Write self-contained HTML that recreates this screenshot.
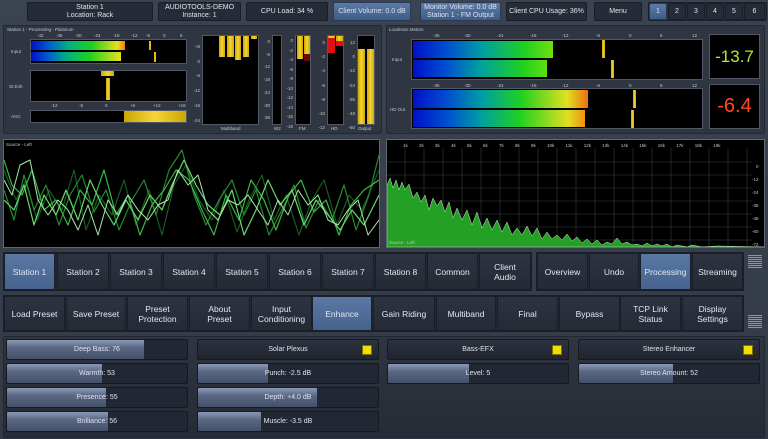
<!DOCTYPE html>
<html><head><meta charset="utf-8">
<style>
*{margin:0;padding:0;box-sizing:border-box}
body{width:768px;height:439px;overflow:hidden;background:linear-gradient(#3b4351,#333a46);font-family:"Liberation Sans",sans-serif;color:#e6e9ef;position:relative}
.a{position:absolute}
.box{position:absolute;background:#262c37;border:1px solid #1a1e26;border-radius:2px;display:flex;align-items:center;justify-content:center;text-align:center;font-size:7px;line-height:8px;color:#dfe3ea}
.blue{background:linear-gradient(#5b7aa6,#3e5c88);border-color:#2a3a55}
.panel{position:absolute;background:#2f3642;border:1px solid #222832;border-radius:2px}
.blk{position:absolute;background:#000;border:1px solid #505866}
.lbl{position:absolute;font-size:4.5px;line-height:5px;color:#bfc6d2;white-space:nowrap}
.y{position:absolute;background:linear-gradient(90deg,#c9a800,#f7d23a,#c9a800)}
.btn{position:absolute;background:linear-gradient(#2d3340,#252a35);border:1px solid #1a1e26;display:flex;align-items:center;justify-content:center;text-align:center;font-size:8.5px;line-height:10px;color:#e4e7ee}
.act{background:linear-gradient(#5a78a3,#45638e)}
.sl{position:absolute;height:21px;background:#222833;border:1px solid #151920;border-radius:2px;overflow:hidden;font-size:7px;color:#dfe3ea}
.sl .f{position:absolute;left:0;top:0;bottom:0;background:linear-gradient(#8a9ab6,#5a6884 40%,#43506a)}
.sl span{position:absolute;left:0;right:0;top:6px;text-align:center}
.sq{position:absolute;right:6px;top:5px;width:10px;height:10px;background:#f0e000;border:1px solid #807000}
.sc{position:absolute;font-size:4.5px;color:#bfc6d2;text-align:right;width:12px}
</style></head><body>
<div class="box" style="left:27px;top:2px;width:126px;height:19px">Station 1<br>Location: Rack</div>
<div class="box" style="left:158px;top:2px;width:83px;height:19px">AUDIOTOOLS-DEMO<br>Instance: 1</div>
<div class="box" style="left:246px;top:2px;width:82px;height:19px">CPU Load: 34 %</div>
<div class="box blue" style="left:333px;top:2px;width:78px;height:19px">Client Volume: 0.0 dB</div>
<div class="box blue" style="left:420px;top:2px;width:81px;height:19px">Monitor Volume: 0.0 dB<br>Station 1 - FM Output</div>
<div class="box" style="left:506px;top:2px;width:81px;height:19px">Client CPU Usage: 36%</div>
<div class="box" style="left:594px;top:2px;width:48px;height:19px">Menu</div>
<div class="box" style="left:648px;top:2px;width:119px;height:19px;background:#2a303b"></div>
<div class="box blue" style="left:649px;top:3px;width:18px;height:17px">1</div>
<div class="box" style="left:668px;top:3px;width:18px;height:17px">2</div>
<div class="box" style="left:687px;top:3px;width:18px;height:17px">3</div>
<div class="box" style="left:706px;top:3px;width:18px;height:17px">4</div>
<div class="box" style="left:725px;top:3px;width:18px;height:17px">5</div>
<div class="box" style="left:744px;top:3px;width:21px;height:17px">6</div>

<div class="panel" style="left:3px;top:25px;width:379px;height:109px"></div>
<div class="lbl" style="left:7px;top:27px">Station 1 - Processing - Platinium</div>
<div class="lbl" style="left:11px;top:49px">Input</div>
<div class="lbl" style="left:9px;top:84px">St Enh</div>
<div class="lbl" style="left:11px;top:114px">AGC</div>
<div class="lbl" style="left:37px;top:33px">-42</div><div class="lbl" style="left:56px;top:33px">-36</div><div class="lbl" style="left:75px;top:33px">-30</div><div class="lbl" style="left:94px;top:33px">-24</div><div class="lbl" style="left:113px;top:33px">-18</div><div class="lbl" style="left:131px;top:33px">-12</div><div class="lbl" style="left:146px;top:33px">-6</div><div class="lbl" style="left:163px;top:33px">0</div><div class="lbl" style="left:180px;top:33px">6</div>
<div class="blk" style="left:30px;top:39px;width:157px;height:25px"></div>
<div class="a" style="left:31px;top:41px;width:94px;height:9px;background:linear-gradient(90deg,#0010c8,#0060d0 20%,#00b080 40%,#20d020 65%,#e8e020 92%,#f08010)"></div>
<div class="a" style="left:31px;top:52px;width:90px;height:9px;background:linear-gradient(90deg,#0010c8,#0060d0 20%,#00b080 40%,#20d020 65%,#e8e020)"></div>
<div class="y" style="left:149px;top:41px;width:2px;height:9px"></div>
<div class="y" style="left:154px;top:52px;width:2px;height:10px"></div>
<div class="blk" style="left:30px;top:70px;width:157px;height:32px"></div>
<div class="y" style="left:101px;top:71px;width:13px;height:5px"></div>
<div class="y" style="left:106px;top:78px;width:4px;height:22px"></div>
<div class="lbl" style="left:51px;top:103px">-12</div><div class="lbl" style="left:79px;top:103px">-6</div><div class="lbl" style="left:105px;top:103px">0</div><div class="lbl" style="left:130px;top:103px">+6</div><div class="lbl" style="left:153px;top:103px">+12</div><div class="lbl" style="left:178px;top:103px">+18</div>
<div class="blk" style="left:30px;top:110px;width:157px;height:13px"></div>
<div class="y" style="left:124px;top:111px;width:62px;height:11px"></div>

<div class="sc" style="left:188px;top:40px;line-height:14.7px">+6<br>0<br>-6<br>-12<br>-18<br>-24</div>
<div class="blk" style="left:202px;top:35px;width:57px;height:90px"></div>
<div class="y" style="left:219px;top:36px;width:6px;height:21px"></div>
<div class="y" style="left:227px;top:36px;width:7px;height:21px"></div>
<div class="y" style="left:235px;top:36px;width:6px;height:24px"></div>
<div class="y" style="left:243px;top:36px;width:6px;height:21px"></div>
<div class="y" style="left:251px;top:36px;width:6px;height:3px"></div>
<div class="lbl" style="left:221px;top:126px">Multiband</div>
<div class="sc" style="left:258px;top:36px;line-height:12.7px">0<br>-6<br>-12<br>-18<br>-24<br>-30<br>-36</div>
<div class="blk" style="left:272px;top:35px;width:10px;height:90px"></div>
<div class="lbl" style="left:274px;top:126px">W2</div>
<div class="sc" style="left:281px;top:36px;line-height:9.5px">0<br>-2<br>-4<br>-6<br>-8<br>-10<br>-12<br>-14<br>-16<br>-18</div>
<div class="blk" style="left:295px;top:35px;width:16px;height:90px"></div>
<div class="y" style="left:297px;top:36px;width:6px;height:23px"></div>
<div class="y" style="left:304px;top:36px;width:6px;height:18px"></div>
<div class="a" style="left:304px;top:54px;width:6px;height:7px;background:#6a0808"></div>
<div class="lbl" style="left:299px;top:126px">FM</div>
<div class="sc" style="left:313px;top:36px;line-height:14.2px">0<br>-2<br>-4<br>-6<br>-8<br>-10<br>-12</div>
<div class="blk" style="left:327px;top:35px;width:17px;height:90px"></div>
<div class="a" style="left:328px;top:36px;width:7px;height:17px;background:#e01010"></div>
<div class="y" style="left:328px;top:36px;width:7px;height:2px"></div>
<div class="a" style="left:336px;top:36px;width:7px;height:10px;background:#e01010"></div>
<div class="y" style="left:336px;top:36px;width:7px;height:5px"></div>
<div class="lbl" style="left:331px;top:126px">HD</div>
<div class="sc" style="left:343px;top:36px;line-height:14.2px">12<br>0<br>-12<br>-24<br>-36<br>-48<br>-60</div>
<div class="blk" style="left:357px;top:35px;width:18px;height:90px"></div>
<div class="y" style="left:358px;top:49px;width:7px;height:75px"></div>
<div class="y" style="left:367px;top:49px;width:7px;height:75px"></div>
<div class="lbl" style="left:358px;top:126px">Output</div>

<div class="panel" style="left:386px;top:25px;width:379px;height:109px"></div>
<div class="lbl" style="left:389px;top:27px">Loudness Meters</div>
<div class="lbl" style="left:392px;top:57px">Input</div>
<div class="lbl" style="left:390px;top:107px">HD Out</div>
<div class="lbl" style="left:433px;top:33px">-36</div><div class="lbl" style="left:464px;top:33px">-30</div><div class="lbl" style="left:497px;top:33px">-24</div><div class="lbl" style="left:530px;top:33px">-18</div><div class="lbl" style="left:562px;top:33px">-12</div><div class="lbl" style="left:596px;top:33px">-6</div><div class="lbl" style="left:629px;top:33px">0</div><div class="lbl" style="left:660px;top:33px">6</div><div class="lbl" style="left:692px;top:33px">12</div>
<div class="lbl" style="left:433px;top:83px">-36</div><div class="lbl" style="left:464px;top:83px">-30</div><div class="lbl" style="left:497px;top:83px">-24</div><div class="lbl" style="left:530px;top:83px">-18</div><div class="lbl" style="left:562px;top:83px">-12</div><div class="lbl" style="left:596px;top:83px">-6</div><div class="lbl" style="left:629px;top:83px">0</div><div class="lbl" style="left:660px;top:83px">6</div><div class="lbl" style="left:692px;top:83px">12</div>
<div class="blk" style="left:411px;top:39px;width:292px;height:41px"></div>
<div class="a" style="left:413px;top:41px;width:140px;height:17px;background:linear-gradient(90deg,#0010c8,#0050d0 25%,#00a0a0 50%,#20d020 80%,#70e010)"></div>
<div class="a" style="left:413px;top:60px;width:134px;height:17px;background:linear-gradient(90deg,#0010c8,#0050d0 25%,#00a0a0 50%,#20d020 82%,#60e010)"></div>
<div class="y" style="left:602px;top:40px;width:3px;height:18px"></div>
<div class="y" style="left:611px;top:60px;width:3px;height:18px"></div>
<div class="blk" style="left:411px;top:88px;width:292px;height:41px"></div>
<div class="a" style="left:413px;top:90px;width:175px;height:18px;background:linear-gradient(90deg,#0010c8,#0050d0 20%,#00a0a0 40%,#20d020 62%,#e0e020 88%,#f07010)"></div>
<div class="a" style="left:413px;top:110px;width:172px;height:17px;background:linear-gradient(90deg,#0010c8,#0050d0 20%,#00a0a0 40%,#20d020 62%,#e0e020 90%,#f09010)"></div>
<div class="y" style="left:633px;top:90px;width:3px;height:18px"></div>
<div class="y" style="left:631px;top:110px;width:3px;height:18px"></div>
<div class="blk" style="left:709px;top:34px;width:51px;height:45px;display:flex;align-items:center;justify-content:center;font-size:17px;color:#b8e830">-13.7</div>
<div class="blk" style="left:709px;top:84px;width:51px;height:45px;display:flex;align-items:center;justify-content:center;font-size:20px;color:#ff4a20">-6.4</div>

<div class="blk" style="left:3px;top:139px;width:377px;height:109px;border-color:#606876"></div>
<div class="lbl" style="left:6px;top:142px">Source - Left</div>
<svg class="a" style="left:4px;top:140px;filter:blur(0.35px)" width="375" height="107" fill="none" stroke-width="1.2" stroke-linejoin="round">
<polyline stroke="#1a5a22" points="0,30 12,60 22,40 33,80 45,50 58,70 70,30 82,90 95,55 108,75 120,40 132,85 145,50 158,95 170,45 182,25 195,60 208,80 220,50 233,92 245,60 258,35 270,80 282,55 295,95 308,60 320,40 333,85 345,55 358,70 375,30"/>
<polyline stroke="#248a30" points="0,50 10,80 20,35 30,70 42,45 55,85 66,55 78,35 90,72 102,50 115,90 128,60 140,40 152,75 165,30 178,10 190,55 202,85 215,60 228,40 240,75 252,50 265,95 278,70 290,45 302,88 315,60 328,80 340,45 352,90 365,55 375,15"/>
<polyline stroke="#3cb848" points="0,20 8,45 18,55 28,30 40,70 52,60 64,85 76,50 88,65 100,30 112,75 124,55 136,95 148,65 160,50 172,30 185,40 198,70 210,95 222,55 235,80 247,40 260,60 272,90 285,55 297,40 310,72 322,60 335,95 347,65 360,50 375,40"/>
<polyline stroke="#6cd870" points="0,60 10,70 20,45 30,85 40,55 52,75 62,50 74,80 86,40 98,65 110,85 122,60 134,80 146,55 158,70 168,45 180,20 192,45 204,65 216,75 228,50 240,95 252,70 264,40 276,65 288,50 300,85 312,60 324,75 336,90 348,70 360,85 375,55"/>
<polyline stroke="#a8e8a8" stroke-width="1" points="0,40 8,55 16,25 26,20 34,60 44,75 54,60 64,70 74,90 84,65 94,95 104,60 114,75 124,55 134,70 144,80 154,65 164,60 174,30 184,45 194,35 204,70 214,80 224,60 234,65 244,55 254,70 264,85 274,60 284,75 294,50 304,65 314,55 324,80 334,85 344,70 354,60 364,95 375,80"/>
</svg>

<div class="blk" style="left:386px;top:139px;width:379px;height:109px;border-color:#606876"></div>
<svg class="a" style="left:387px;top:140px" width="377" height="107">
<g stroke="#3a3f48" stroke-width="0.6">
<line x1="18" y1="8" x2="18" y2="107"/><line x1="37" y1="8" x2="37" y2="107"/><line x1="56" y1="8" x2="56" y2="107"/><line x1="75" y1="8" x2="75" y2="107"/><line x1="94" y1="8" x2="94" y2="107"/><line x1="113" y1="8" x2="113" y2="107"/><line x1="132" y1="8" x2="132" y2="107"/><line x1="151" y1="8" x2="151" y2="107"/><line x1="170" y1="8" x2="170" y2="107"/><line x1="189" y1="8" x2="189" y2="107"/><line x1="208" y1="8" x2="208" y2="107"/><line x1="227" y1="8" x2="227" y2="107"/><line x1="246" y1="8" x2="246" y2="107"/><line x1="265" y1="8" x2="265" y2="107"/><line x1="284" y1="8" x2="284" y2="107"/><line x1="303" y1="8" x2="303" y2="107"/><line x1="322" y1="8" x2="322" y2="107"/><line x1="341" y1="8" x2="341" y2="107"/><line x1="360" y1="8" x2="360" y2="107"/>
<line x1="0" y1="22" x2="365" y2="22"/><line x1="0" y1="35" x2="365" y2="35"/><line x1="0" y1="48" x2="365" y2="48"/><line x1="0" y1="61" x2="365" y2="61"/><line x1="0" y1="74" x2="365" y2="74"/><line x1="0" y1="87" x2="365" y2="87"/><line x1="0" y1="100" x2="365" y2="100"/>
</g>
<polygon fill="#24a024" stroke="#c8e8c8" stroke-width="0.5" points="0,107 0,45 3,38 6,48 9,40 12,50 15,42 18,50 22,44 26,58 30,52 34,62 38,55 42,70 46,58 50,66 54,60 58,72 62,62 66,78 70,68 75,80 80,70 85,85 90,72 95,88 100,78 105,90 110,80 115,92 120,82 125,95 130,88 135,95 140,86 145,96 150,88 155,99 160,92 165,99 170,95 175,100 180,94 185,101 190,97 195,103 200,99 205,104 210,100 215,105 220,102 225,104 230,98 235,104 240,102 245,105 250,104 255,106 260,103 265,106 270,104 275,106 280,104 285,107 290,105 300,107 305,105 315,107 330,106 377,107"/>
</svg>
<div class="lbl" style="left:403px;top:143px;word-spacing:10px">1k 2k 3k 4k 5k 6k 7k 8k 9k 10k 11k 12k 13k 14k 15k 16k 17k 18k 19k</div>
<div class="lbl" style="left:752px;top:160px;line-height:13px;text-align:right">0<br>-12<br>-24<br>-36<br>-48<br>-60<br>-72</div>
<div class="lbl" style="left:389px;top:240px">Source - Left</div>

<div class="a" style="left:3px;top:252px;width:529px;height:39px;background:#222731;border:1px solid #1a1e26"></div>
<div class="btn act" style="left:4px;top:253px;width:51px;height:37px">Station 1</div>
<div class="btn" style="left:57px;top:253px;width:52px;height:37px">Station 2</div>
<div class="btn" style="left:110px;top:253px;width:52px;height:37px">Station 3</div>
<div class="btn" style="left:163px;top:253px;width:52px;height:37px">Station 4</div>
<div class="btn" style="left:216px;top:253px;width:52px;height:37px">Station 5</div>
<div class="btn" style="left:269px;top:253px;width:52px;height:37px">Station 6</div>
<div class="btn" style="left:322px;top:253px;width:52px;height:37px">Station 7</div>
<div class="btn" style="left:375px;top:253px;width:51px;height:37px">Station 8</div>
<div class="btn" style="left:427px;top:253px;width:51px;height:37px">Common</div>
<div class="btn" style="left:479px;top:253px;width:52px;height:37px">Client<br>Audio</div>
<div class="a" style="left:536px;top:252px;width:208px;height:39px;background:#222731;border:1px solid #1a1e26"></div>
<div class="btn" style="left:537px;top:253px;width:51px;height:37px">Overview</div>
<div class="btn" style="left:589px;top:253px;width:50px;height:37px">Undo</div>
<div class="btn act" style="left:640px;top:253px;width:51px;height:37px">Processing</div>
<div class="btn" style="left:692px;top:253px;width:51px;height:37px">Streaming</div>
<div class="a" style="left:748px;top:255px;width:14px;height:14px;background:repeating-linear-gradient(#8d95a3 0 1px,#3a404c 1px 2px)"></div>

<div class="a" style="left:3px;top:295px;width:741px;height:37px;background:#222731;border:1px solid #1a1e26"></div>
<div class="btn" style="left:4px;top:296px;width:61px;height:35px">Load Preset</div>
<div class="btn" style="left:66px;top:296px;width:60px;height:35px">Save Preset</div>
<div class="btn" style="left:127px;top:296px;width:61px;height:35px">Preset<br>Protection</div>
<div class="btn" style="left:189px;top:296px;width:61px;height:35px">About<br>Preset</div>
<div class="btn" style="left:251px;top:296px;width:61px;height:35px">Input<br>Conditioning</div>
<div class="btn act" style="left:312px;top:296px;width:60px;height:35px">Enhance</div>
<div class="btn" style="left:373px;top:296px;width:62px;height:35px">Gain Riding</div>
<div class="btn" style="left:436px;top:296px;width:60px;height:35px">Multiband</div>
<div class="btn" style="left:497px;top:296px;width:61px;height:35px">Final</div>
<div class="btn" style="left:559px;top:296px;width:61px;height:35px">Bypass</div>
<div class="btn" style="left:620px;top:296px;width:61px;height:35px">TCP Link<br>Status</div>
<div class="btn" style="left:682px;top:296px;width:61px;height:35px">Display<br>Settings</div>
<div class="a" style="left:748px;top:315px;width:14px;height:14px;background:repeating-linear-gradient(#8d95a3 0 1px,#3a404c 1px 2px)"></div>

<div class="panel" style="left:3px;top:336px;width:762px;height:102px;background:linear-gradient(#2f3541,#262b35)"></div>
<div class="sl" style="left:6px;top:339px;width:182px"><div class="f" style="width:76%"></div><span>Deep Bass: 76</span></div>
<div class="sl" style="left:6px;top:363px;width:182px"><div class="f" style="width:53%"></div><span>Warmth: 53</span></div>
<div class="sl" style="left:6px;top:387px;width:182px"><div class="f" style="width:55%"></div><span>Presence: 55</span></div>
<div class="sl" style="left:6px;top:411px;width:182px"><div class="f" style="width:56%"></div><span>Brilliance: 56</span></div>
<div class="sl" style="left:197px;top:339px;width:182px;background:linear-gradient(#2c323e,#20252f)"><span>Solar Plexus</span><div class="sq"></div></div>
<div class="sl" style="left:197px;top:363px;width:182px"><div class="f" style="width:39%"></div><span>Punch: -2.5 dB</span></div>
<div class="sl" style="left:197px;top:387px;width:182px"><div class="f" style="width:66%"></div><span>Depth: +4.0 dB</span></div>
<div class="sl" style="left:197px;top:411px;width:182px"><div class="f" style="width:35%"></div><span>Muscle: -3.5 dB</span></div>
<div class="sl" style="left:387px;top:339px;width:182px;background:linear-gradient(#2c323e,#20252f)"><span>Bass-EFX</span><div class="sq"></div></div>
<div class="sl" style="left:387px;top:363px;width:182px"><div class="f" style="width:45%"></div><span>Level: 5</span></div>
<div class="sl" style="left:578px;top:339px;width:182px;background:linear-gradient(#2c323e,#20252f)"><span>Stereo Enhancer</span><div class="sq"></div></div>
<div class="sl" style="left:578px;top:363px;width:182px"><div class="f" style="width:52%"></div><span>Stereo Amount: 52</span></div>
</body></html>
